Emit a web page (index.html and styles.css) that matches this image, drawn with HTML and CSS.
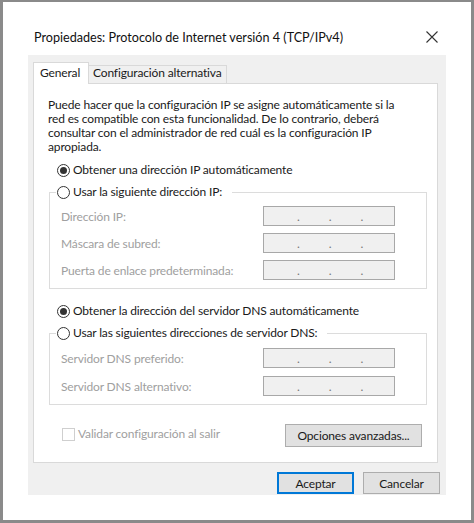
FILE: index.html
```html
<!DOCTYPE html>
<html lang="es">
<head>
  <meta charset="UTF-8" />
  <title>Propiedades: Protocolo de Internet versión 4 (TCP/IPv4)</title>
  <link rel="stylesheet" href="styles.css">
</head>
<body>
  <div class="frame">
    <div class="titlebar">
      <span class="title">Propiedades: Protocolo de Internet versión 4 (TCP/IPv4)</span>
      <svg class="close" width="12" height="12" viewBox="0 0 12 12">
        <path d="M0.5 0.5 L11.5 11.5 M11.5 0.5 L0.5 11.5" stroke="#333" stroke-width="1.1" fill="none" />
      </svg>
    </div>

    <div class="panel">
      <div class="tabs">
        <div class="tab active">General</div>
        <div class="tab">Configuración alternativa</div>
      </div>

      <div class="page">
        <p class="intro">
          Puede hacer que la configuración IP se asigne automáticamente si la<br />
          red es compatible con esta funcionalidad. De lo contrario, deberá<br />
          consultar con el administrador de red cuál es la configuración IP<br />
          apropiada.
        </p>

        <div class="option first">
          <span class="radio checked"></span>
          <span>Obtener una dirección IP automáticamente</span>
        </div>

        <fieldset class="group">
          <legend class="option">
            <span class="radio"></span>
            <span>Usar la siguiente dirección IP:</span>
          </legend>
          <div class="fields">
            <div class="field">
              <span>Dirección IP:</span>
              <div class="ip"><span>.</span><span>.</span><span>.</span></div>
            </div>
            <div class="field">
              <span>Máscara de subred:</span>
              <div class="ip"><span>.</span><span>.</span><span>.</span></div>
            </div>
            <div class="field">
              <span>Puerta de enlace predeterminada:</span>
              <div class="ip"><span>.</span><span>.</span><span>.</span></div>
            </div>
          </div>
        </fieldset>

        <div class="option dns">
          <span class="radio checked"></span>
          <span>Obtener la dirección del servidor DNS automáticamente</span>
        </div>

        <fieldset class="group">
          <legend class="option">
            <span class="radio"></span>
            <span>Usar las siguientes direcciones de servidor DNS:</span>
          </legend>
          <div class="fields dns-fields">
            <div class="field">
              <span>Servidor DNS preferido:</span>
              <div class="ip"><span>.</span><span>.</span><span>.</span></div>
            </div>
            <div class="field">
              <span>Servidor DNS alternativo:</span>
              <div class="ip"><span>.</span><span>.</span><span>.</span></div>
            </div>
          </div>
        </fieldset>

        <div class="bottom-row">
          <div class="check">
            <span class="box"></span>
            <span>Validar configuración al salir</span>
          </div>
          <button class="btn advanced">Opciones avanzadas...</button>
        </div>
      </div>

      <div class="actions">
        <button class="btn default">Aceptar</button>
        <button class="btn">Cancelar</button>
      </div>
    </div>
  </div>
</body>
</html>
```

FILE: styles.css
```css
* {
  box-sizing: border-box;
}

body {
  margin: 0;
  background: #fff;
  color: #1a1a1a;
  font-family: "Segoe UI", Lato, sans-serif;
  font-size: 12px;
  letter-spacing: -0.15px;
}

.frame {
  width: 474px;
  height: 523px;
  border-style: solid;
  border-color: #8a8a8a;
  border-width: 2px 3px 3px 3px;
  padding: 0 25px;
}

/* Title bar */
.titlebar {
  height: 53px;
  display: flex;
  align-items: flex-start;
  justify-content: space-between;
  padding: 26px 8px 0 6px;
}

.title {
  font-size: 12.6px;
  line-height: 20px;
  letter-spacing: 0;
  color: #111;
}

.close {
  margin-top: 3px;
}

/* Gray dialog body */
.panel {
  height: 440px;
  background: #f0f0f0;
  padding: 7px 8px 0 5px;
}

.tabs {
  display: flex;
  align-items: flex-end;
  height: 21px;
}

.tab {
  border: 1px solid #d9d9d9;
  border-bottom: none;
  line-height: 14px;
  height: 18px;
  padding: 0 4px;
  background: #f0f0f0;
  white-space: nowrap;
}

.tab.active {
  position: relative;
  z-index: 1;
  background: #fff;
  width: 56px;
  height: 22px;
  line-height: 20px;
  margin-bottom: -1px;
  padding: 0 6px;
}

.tab + .tab {
  margin-left: -1px;
}

.page {
  width: 405px;
  height: 380px;
  border: 1px solid #d9d9d9;
  background: #fff;
  padding: 14px 15px 0 14px;
}

.intro {
  margin: 0;
  line-height: 14px;
}

/* Radio options */
.option {
  display: flex;
  align-items: center;
  height: 20px;
  line-height: 20px;
  white-space: nowrap;
}

.option.first {
  margin-top: 6px;
  padding-left: 9px;
}

.option.dns {
  margin-top: 12px;
  padding-left: 9px;
}

.radio {
  flex: none;
  width: 13px;
  height: 13px;
  border: 1px solid #333;
  border-radius: 50%;
  margin-right: 3px;
  background: #fff;
  display: flex;
  align-items: center;
  justify-content: center;
}

.radio.checked::after {
  content: "";
  width: 7px;
  height: 7px;
  border-radius: 50%;
  background: #333;
}

/* Group boxes */
.group {
  width: 378px;
  margin: 2px 0 0 1px;
  padding: 0;
  border: 1px solid #dcdcdc;
}

.group legend {
  margin-left: 6px;
  padding: 0 10px 0 1px;
}

.fields {
  display: flex;
  flex-direction: column;
  gap: 7px;
  padding: 4px 31px 8px 11px;
}

.fields.dns-fields {
  gap: 8px;
  padding-top: 5px;
}

.field {
  display: flex;
  align-items: center;
  justify-content: space-between;
  height: 20px;
  color: #a0a0a0;
}

.ip {
  width: 132px;
  height: 20px;
  border: 1px solid #a8a8a8;
  background: #f0f0f0;
  display: flex;
  gap: 29px;
  padding: 3px 0 0 33px;
  color: #777;
  line-height: 14px;
}

/* Bottom row */
.bottom-row {
  display: flex;
  justify-content: space-between;
  align-items: flex-start;
  margin-top: 19px;
}

.check {
  display: flex;
  align-items: center;
  margin: 3px 0 0 14px;
  color: #a0a0a0;
  line-height: 14px;
}

.check .box {
  width: 13px;
  height: 13px;
  border: 1px solid #cfcfcf;
  margin-right: 3px;
}

.btn {
  font-family: inherit;
  font-size: 12px;
  letter-spacing: -0.15px;
  color: #1a1a1a;
  background: #e1e1e1;
  border: 1px solid #adadad;
  padding: 0;
  height: 22px;
  width: 77px;
}

.btn.advanced {
  width: 137px;
  height: 23px;
}

.btn.default {
  border: 2px solid #0078d7;
}

.actions {
  display: flex;
  justify-content: flex-end;
  gap: 9px;
  margin: 9px -2px 0 0;
}
```
